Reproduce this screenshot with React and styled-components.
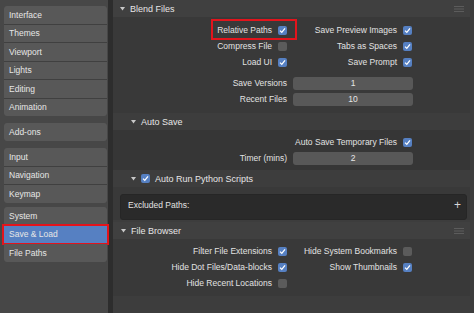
import styled, { createGlobalStyle } from "styled-components";

const GlobalStyle = createGlobalStyle`
  html, body {
    margin: 0;
    padding: 0;
    background: #3d3d3d;
  }
  body {
    font-family: "Liberation Sans", Arial, sans-serif;
    font-size: 8.5px;
    color: #e2e2e2;
  }
`;

const Window = styled.div`
  display: flex;
  width: 474px;
  height: 313px;
  overflow: hidden;
`;

const Sidebar = styled.nav`
  width: 108px;
  flex-shrink: 0;
  box-sizing: border-box;
  padding: 6px 1px 0 4px;
  background: #474747;
  display: flex;
  flex-direction: column;
`;

const NavGroup = styled.div`
  display: flex;
  flex-direction: column;
  gap: 1px;
  background: #404040;
  border-radius: 3px;
  margin-bottom: ${(p) => p.$gap}px;
`;

const NavItem = styled.div`
  position: relative;
  height: 17.5px;
  display: flex;
  align-items: center;
  padding-left: 5px;
  background: ${(p) => (p.$active ? "#5680c2" : "#585858")};
  color: #e6e6e6;

  &:first-child {
    border-radius: 3px 3px 0 0;
  }
  &:last-child {
    border-radius: 0 0 3px 3px;
  }
  &:only-child {
    border-radius: 3px;
  }

  ${(p) =>
    p.$marked &&
    `
    &::after {
      content: "";
      position: absolute;
      inset: -2px -2px -2px -2px;
      border: 2.5px solid #e3141c;
    }
  `}
`;

const Main = styled.main`
  flex: 1;
  background: #3d3d3d;
  border-left: 5px solid #2d2d2d;
  padding-right: 4px;
  display: flex;
  flex-direction: column;
  gap: 2px;
`;

const Panel = styled.section`
  background: #393939;
`;

const PanelHeader = styled.div`
  height: 17px;
  display: flex;
  align-items: center;
  gap: 5px;
  padding: 0 6px 0 ${(p) => p.$indent}px;
  background: ${(p) => (p.$sub ? "#3d3d3d" : "#404040")};
  font-size: 9px;
  color: #e6e6e6;

  .grip {
    margin-left: auto;
  }
`;

const PanelBody = styled.div`
  padding: ${(p) => p.$pad};
  background: ${(p) => (p.$sub ? "#363636" : "transparent")};
`;

const CheckGrid = styled.div`
  display: grid;
  grid-template-columns: 174px 125px;
  grid-auto-rows: 16px;
`;

const Cell = styled.div`
  display: flex;
  justify-content: flex-end;
  align-items: center;
  gap: 6px;
`;

const CheckField = styled.label`
  position: relative;
  display: flex;
  align-items: center;
  gap: 6px;

  ${(p) =>
    p.$marked &&
    `
    &::after {
      content: "";
      position: absolute;
      inset: -6px -10px -5px -6px;
      border: 2.5px solid #e3141c;
    }
  `}
`;

const Box = styled.span`
  width: 9px;
  height: 9px;
  border-radius: 2px;
  background: ${(p) => (p.$on ? "#5680c2" : "#5b5b5b")};
  display: inline-flex;
  align-items: center;
  justify-content: center;
  flex-shrink: 0;
`;

const FieldGrid = styled.div`
  display: grid;
  grid-template-columns: 180px 120px;
  grid-auto-rows: 16px;
  margin-top: ${(p) => p.$top || 0}px;
`;

const FieldLabel = styled.div`
  display: flex;
  align-items: center;
  justify-content: flex-end;
  padding-right: 6px;
`;

const NumberField = styled.div`
  align-self: center;
  height: 13px;
  border-radius: 3px;
  background: #585858;
  display: flex;
  align-items: center;
  justify-content: center;
  color: #e6e6e6;
`;

const ListBox = styled.div`
  margin: 7px 3px 0 7px;
  height: 26px;
  box-sizing: border-box;
  background: #2a2a2a;
  border: 1px solid #262626;
  border-radius: 3px;
  display: flex;
  justify-content: space-between;
  align-items: flex-start;
  padding: 5px 5px 0 7px;

  .plus {
    font-size: 12px;
    line-height: 10px;
    color: #d8d8d8;
  }
`;

function Check({ on }) {
  return (
    <Box $on={on}>
      {on && (
        <svg width="7" height="7" viewBox="0 0 7 7">
          <polyline
            points="1,3.6 2.8,5.4 6,1.4"
            fill="none"
            stroke="#fff"
            strokeWidth="1.3"
          />
        </svg>
      )}
    </Box>
  );
}

function Toggle({ label, on, marked }) {
  return (
    <Cell>
      <CheckField $marked={marked}>
        {label}
        <Check on={on} />
      </CheckField>
    </Cell>
  );
}

function Arrow() {
  return (
    <svg width="5" height="5" viewBox="0 0 5 5">
      <polygon points="0,1 5,1 2.5,4.5" fill="#c8c8c8" />
    </svg>
  );
}

function Grip() {
  return (
    <svg className="grip" width="10" height="6" viewBox="0 0 10 6">
      <g stroke="#5c5c5c" strokeWidth="1">
        <line x1="0" y1="0.5" x2="10" y2="0.5" />
        <line x1="0" y1="3" x2="10" y2="3" />
        <line x1="0" y1="5.5" x2="10" y2="5.5" />
      </g>
    </svg>
  );
}

const nav = [
  { gap: 7, items: ["Interface", "Themes", "Viewport", "Lights", "Editing", "Animation"] },
  { gap: 7.5, items: ["Add-ons"] },
  { gap: 4.5, items: ["Input", "Navigation", "Keymap"] },
  { gap: 0, items: ["System", "Save & Load", "File Paths"] },
];

export default function App() {
  return (
    <Window>
      <GlobalStyle />
      <Sidebar>
        {nav.map((g, i) => (
          <NavGroup key={i} $gap={g.gap}>
            {g.items.map((name) => (
              <NavItem
                key={name}
                $active={name === "Save & Load"}
                $marked={name === "Save & Load"}
              >
                {name}
              </NavItem>
            ))}
          </NavGroup>
        ))}
      </Sidebar>

      <Main>
        <Panel>
          <PanelHeader $indent={7}>
            <Arrow />
            Blend Files
            <Grip />
          </PanelHeader>
          <PanelBody $pad="5px 0 0">
            <CheckGrid>
              <Toggle label="Relative Paths" on marked />
              <Toggle label="Save Preview Images" on />
              <Toggle label="Compress File" />
              <Toggle label="Tabs as Spaces" on />
              <Toggle label="Load UI" on />
              <Toggle label="Save Prompt" on />
            </CheckGrid>
            <FieldGrid $top={5}>
              <FieldLabel>Save Versions</FieldLabel>
              <NumberField>1</NumberField>
              <FieldLabel>Recent Files</FieldLabel>
              <NumberField>10</NumberField>
            </FieldGrid>
          </PanelBody>

          <PanelHeader $sub $indent={18} style={{ marginTop: 6 }}>
            <Arrow />
            Auto Save
          </PanelHeader>
          <PanelBody $sub $pad="4px 0">
            <CheckGrid>
              <Cell />
              <Toggle label="Auto Save Temporary Files" on />
            </CheckGrid>
            <FieldGrid>
              <FieldLabel>Timer (mins)</FieldLabel>
              <NumberField>2</NumberField>
            </FieldGrid>
          </PanelBody>

          <PanelHeader $sub $indent={18}>
            <Arrow />
            <Check on />
            Auto Run Python Scripts
          </PanelHeader>
          <PanelBody $pad="0 0 0">
            <ListBox>
              Excluded Paths:
              <span className="plus">+</span>
            </ListBox>
          </PanelBody>
        </Panel>

        <Panel>
          <PanelHeader $indent={8}>
            <Arrow />
            File Browser
            <Grip />
          </PanelHeader>
          <PanelBody $pad="4px 0 5px">
            <CheckGrid>
              <Toggle label="Filter File Extensions" on />
              <Toggle label="Hide System Bookmarks" />
              <Toggle label="Hide Dot Files/Data-blocks" on />
              <Toggle label="Show Thumbnails" on />
              <Toggle label="Hide Recent Locations" />
            </CheckGrid>
          </PanelBody>
        </Panel>
      </Main>
    </Window>
  );
}
